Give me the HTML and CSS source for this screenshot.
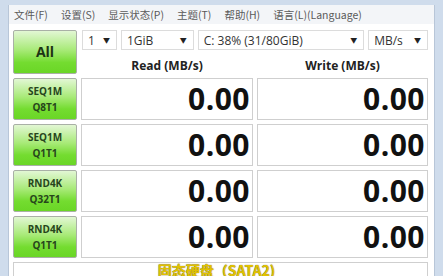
FILE: index.html
```html
<!DOCTYPE html>
<html lang="zh">
<head>
    <meta charset="UTF-8">
    <title>CrystalDiskMark</title>
    <link rel="stylesheet" href="styles.css">
</head>
<body>

<div class="window">
    <div class="menubar">
        <span>文件(F)</span>
        <span>设置(S)</span>
        <span>显示状态(P)</span>
        <span>主题(T)</span>
        <span>帮助(H)</span>
        <span>语言(L)(Language)</span>
    </div>

    <div class="client">
        <div class="grid">
            <button class="btn all">All</button>
            <div class="controls">
                <div class="select w-count">1<i>▼</i></div>
                <div class="select w-size">1GiB<i>▼</i></div>
                <div class="select w-drive">C: 38% (31/80GiB)<i>▼</i></div>
                <div class="select w-unit">MB/s<i>▼</i></div>
            </div>
            <div class="head">Read (MB/s)</div>
            <div class="head">Write (MB/s)</div>

            <button class="btn">SEQ1M<br>Q8T1</button>
            <div class="value">0.00</div>
            <div class="value">0.00</div>

            <button class="btn">SEQ1M<br>Q1T1</button>
            <div class="value">0.00</div>
            <div class="value">0.00</div>

            <button class="btn">RND4K<br>Q32T1</button>
            <div class="value">0.00</div>
            <div class="value">0.00</div>

            <button class="btn">RND4K<br>Q1T1</button>
            <div class="value">0.00</div>
            <div class="value">0.00</div>

            <div class="comment">固态硬盘（SATA2)</div>
        </div>
    </div>
</div>

</body>
</html>
```

FILE: styles.css
```css
body { margin: 0; background: #cfdcec; font-family: "Open Sans", "Noto Sans CJK SC", sans-serif; }
.window { width: 443px; height: 276px; padding-top: 5px; box-sizing: border-box; overflow: hidden; }

.menubar { margin: 0 8px; height: 19px; background: #f3f5f8; display: flex; align-items: center; gap: 13px; padding-left: 5px; font-family: "Noto Sans CJK SC", sans-serif; font-size: 10.5px; color: #5a5a5a; border-left: 1px solid #b8c6d8; border-right: 1px solid #b8c6d8; }

.client { margin: 0 8px; background: #fff; height: 260px; border-left: 1px solid #b8c6d8; border-right: 1px solid #b8c6d8; padding: 6px 6px 0 4px; box-sizing: border-box; }

.grid { display: grid; grid-template-columns: 64px 172px 171px; grid-template-rows: 20px 20px repeat(4, 42px) 30px; column-gap: 4px; row-gap: 4px; }

.btn { border: 1px solid #a9b0a6; border-radius: 2px; background: linear-gradient(#e2f7d4, #a8ea78 45%, #74dc30 75%, #6ad626); font-family: "Open Sans", sans-serif; font-weight: bold; font-size: 10px; line-height: 16px; color: #27451c; padding: 0; }
.btn.all { grid-row: span 2; font-size: 14px; color: #1d3414; }

.controls { grid-column: span 2; display: flex; gap: 4px; padding-left: 1px; }
.select { height: 20px; box-sizing: border-box; border: 1px solid #dcdcdc; display: flex; align-items: center; justify-content: space-between; padding: 0 6px 0 5px; font-size: 12px; color: #333; }
.select i { font-style: normal; font-size: 7px; color: #222; }
.w-count { width: 35px; }
.w-size { width: 73px; }
.w-drive { width: 167px; }
.w-unit { width: 60px; }

.head { text-align: center; font-weight: bold; font-size: 12px; color: #222; line-height: 20px; padding-top: 2px; }

.value { border: 1px solid #cfcfcf; text-align: right; font-weight: bold; font-size: 30px; line-height: 40px; padding-right: 2px; color: #111; letter-spacing: 0.5px; }

.comment { grid-column: span 3; border: 1px solid #cfcfcf; text-align: center; font-family: "Noto Sans CJK SC", sans-serif; font-weight: bold; font-size: 14px; line-height: 14px; color: #e2c200; text-shadow: 0 0 1px #5a4a00; padding-right: 8px; }
```
